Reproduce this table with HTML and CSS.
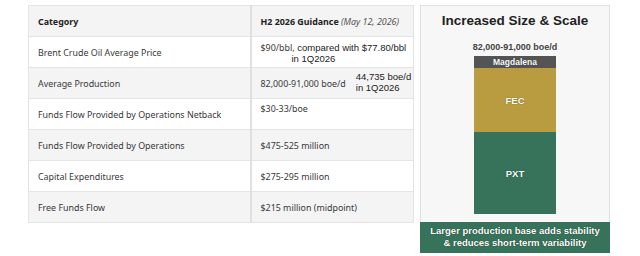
FILE: index.html
```html
<!DOCTYPE html>
<html>
<head>
<meta charset="utf-8">
<link rel="stylesheet" href="styles.css">
</head>
<body>
<div class="page">
  <table class="guide">
    <tr class="head">
      <th class="c1">Category</th>
      <th class="c2">H2 2026 Guidance <em>(May 12, 2026)</em></th>
    </tr>
    <tr class="w">
      <td class="c1">Brent Crude Oil Average Price</td>
      <td class="c2"><span>$90/bbl,</span><span class="ov"> compared with $77.80/bbl</span><span class="ov l2">in 1Q2026</span></td>
    </tr>
    <tr class="g">
      <td class="c1">Average Production</td>
      <td class="c2"><div class="prod"><span>82,000-91,000 boe/d</span><span class="ov two">44,735 boe/d<br>in 1Q2026</span></div></td>
    </tr>
    <tr class="w">
      <td class="c1">Funds Flow Provided by Operations Netback</td>
      <td class="c2 top">$30-33/boe</td>
    </tr>
    <tr class="g">
      <td class="c1">Funds Flow Provided by Operations</td>
      <td class="c2">$475-525 million</td>
    </tr>
    <tr class="w">
      <td class="c1">Capital Expenditures</td>
      <td class="c2">$275-295 million</td>
    </tr>
    <tr class="g">
      <td class="c1">Free Funds Flow</td>
      <td class="c2">$215 million (midpoint)</td>
    </tr>
  </table>
  <div class="panel">
    <div class="inner">
      <div class="title">Increased Size &amp; Scale</div>
      <div class="sub">82,000-91,000 boe/d</div>
      <div class="bar">
        <div class="seg mag">Magdalena</div>
        <div class="seg fec">FEC</div>
        <div class="seg pxt">PXT</div>
      </div>
    </div>
    <div class="foot">Larger production base adds stability<br>&amp; reduces short-term variability</div>
  </div>
</div>
</body>
</html>
```
FILE: styles.css
```css
html, body { margin: 0; padding: 0; background: #fff; }
.page {
  display: flex;
  align-items: flex-start;
  gap: 6px;
  padding: 5px 0 0 28px;
}
.guide {
  border-collapse: collapse;
  width: 386px;
  font-family: "Noto Sans", sans-serif;
  font-size: 8.9px;
  color: #383838;
  border: 1px solid #e4e4e4;
}
.guide th, .guide td {
  height: 31px;
  padding: 0 0 0 9px;
  text-align: left;
  border-bottom: 1px solid #e4e4e4;
  vertical-align: middle;
  box-sizing: border-box;
}
.guide th { font-weight: 700; color: #222; }
.guide th em { font-weight: 400; color: #555; }
.guide .c1 { width: 222px; border-right: 2px solid #e0e0e0; }
.head, .g { background: #f4f4f4; }
.w { background: #fff; }
.ov { font-family: "Liberation Sans", Arial, sans-serif; font-size: 9.5px; color: #222; }
.l2 { display: block; padding-left: 31px; line-height: 10px; }
.prod { display: flex; align-items: center; gap: 10px; }
.two { line-height: 11px; margin-top: -2px; }
.guide td.top { vertical-align: top; padding-top: 3px; }
.panel {
  width: 190px;
  font-family: "Liberation Sans", Arial, sans-serif;
  font-weight: 700;
}
.inner {
  background: #f7f7f7;
  border: 1px solid #e0e0e0;
  border-bottom: none;
  height: 217px;
  box-sizing: border-box;
  display: flex;
  flex-direction: column;
  align-items: center;
}
.title { font-size: 13.5px; color: #222; margin-top: 7px; }
.sub { font-size: 9px; color: #444; margin-top: 14px; }
.bar { width: 82px; margin-top: 4px; display: flex; flex-direction: column; color: #fff; text-shadow: 0 0 1px rgba(0,0,0,0.6); }
.seg { display: flex; align-items: center; justify-content: center; }
.mag { height: 12px; background: #545454; font-size: 8.5px; }
.fec { height: 64px; background: #b99c40; font-size: 9.5px; }
.pxt { height: 82px; background: #37735a; font-size: 9.5px; }
.foot {
  background: #37735a;
  color: #fff;
  font-size: 9.5px;
  text-align: center;
  line-height: 12px;
  padding: 3px 0 4px;
  text-shadow: 0 0 1px rgba(0,0,0,0.7);
}
```
